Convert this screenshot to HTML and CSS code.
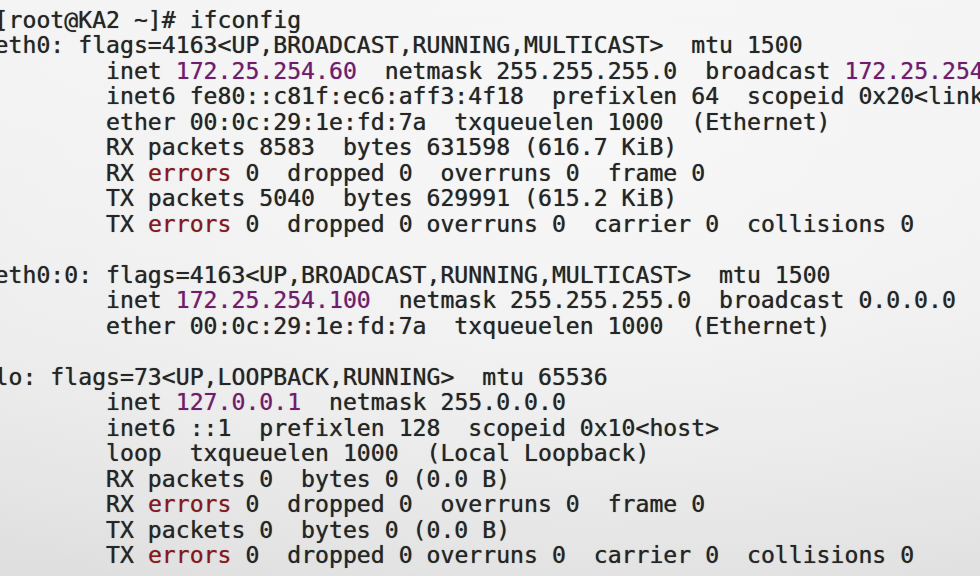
FILE: index.html
```html
<!DOCTYPE html>
<html lang="en">
<head>
<meta charset="utf-8">
<title>ifconfig</title>
<link rel="stylesheet" href="styles.css">
</head>
<body>
<main class="screen">
<pre class="term">[root@KA2 ~]# ifconfig
eth0: flags=4163&lt;UP,BROADCAST,RUNNING,MULTICAST&gt;  mtu 1500
        inet <span class="ip">172.25.254.60</span>  netmask 255.255.255.0  broadcast <span class="ip">172.25.254.255</span>
        inet6 fe80::c81f:ec6:aff3:4f18  prefixlen 64  scopeid 0x20&lt;link&gt;
        ether 00:0c:29:1e:fd:7a  txqueuelen 1000  (Ethernet)
        RX packets 8583  bytes 631598 (616.7 KiB)
        RX <span class="err">errors</span> 0  dropped 0  overruns 0  frame 0
        TX packets 5040  bytes 629991 (615.2 KiB)
        TX <span class="err">errors</span> 0  dropped 0 overruns 0  carrier 0  collisions 0

eth0:0: flags=4163&lt;UP,BROADCAST,RUNNING,MULTICAST&gt;  mtu 1500
        inet <span class="ip">172.25.254.100</span>  netmask 255.255.255.0  broadcast 0.0.0.0
        ether 00:0c:29:1e:fd:7a  txqueuelen 1000  (Ethernet)

lo: flags=73&lt;UP,LOOPBACK,RUNNING&gt;  mtu 65536
        inet <span class="ip">127.0.0.1</span>  netmask 255.0.0.0
        inet6 ::1  prefixlen 128  scopeid 0x10&lt;host&gt;
        loop  txqueuelen 1000  (Local Loopback)
        RX packets 0  bytes 0 (0.0 B)
        RX <span class="err">errors</span> 0  dropped 0  overruns 0  frame 0
        TX packets 0  bytes 0 (0.0 B)
        TX <span class="err">errors</span> 0  dropped 0 overruns 0  carrier 0  collisions 0</pre>
</main>
</body>
</html>
```
FILE: styles.css
```css
html, body {
  margin: 0;
  padding: 0;
  height: 100%;
}
body {
  overflow: hidden;
  background: #ececec;
}
.screen {
  width: 980px;
  height: 576px;
  overflow: hidden;
  background:
    radial-gradient(ellipse 900px 520px at 60% 25%, rgba(248,248,248,0.9) 0%, rgba(248,248,248,0) 100%),
    linear-gradient(to bottom, #f2f2f2 0%, #ebebeb 55%, #dfdfdf 100%);
}
.term {
  margin: 0 0 0 -5.4px;
  padding-top: 7.5px;
  font-family: "DejaVu Sans Mono", monospace;
  font-size: 23.15px;
  line-height: 25.52px;
  color: #252525;
  white-space: pre;
  text-shadow: 0 0 0.8px rgba(20,20,20,0.7);
}
.ip {
  color: #701c6c;
  text-shadow: 0 0 0.8px rgba(112,28,108,0.6);
}
.err {
  color: #821920;
  text-shadow: 0 0 0.8px rgba(130,25,32,0.6);
}
```
